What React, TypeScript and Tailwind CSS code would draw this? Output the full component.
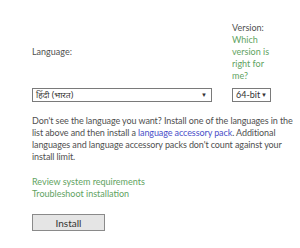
import React from "react";

export default function App() {
  return (
    <div
      className="w-[300px] h-[248px] bg-white text-[#505050] text-[9px] leading-[12px]"
      style={{ fontFamily: 'Lato, "Noto Sans", sans-serif' }}
    >
      <div className="pl-[32px] pr-[16px] pt-[22px]">
        <div className="flex">
          <div className="w-[200px] flex items-center">Language:</div>
          <div className="w-[50px] whitespace-nowrap">
            <div>Version:</div>
            <div className="text-[#5fa35f]">
              Which
              <br />
              version is
              <br />
              right for
              <br />
              me?
            </div>
          </div>
        </div>
        <div className="flex mt-[6px]">
          <div className="w-[180px] h-[14px] border border-[#7a7a7a] flex items-center justify-between pl-[3px] pr-[4px] text-[#333]">
            <span style={{ fontFamily: '"Noto Sans", sans-serif' }} className="text-[8.5px]">
              हिंदी (भारत)
            </span>
            <span className="text-[6px]">▼</span>
          </div>
          <div className="ml-[20px] w-[39px] h-[14px] border border-[#7a7a7a] flex items-center justify-between pl-[3px] pr-[3px] text-[#333] whitespace-nowrap">
            <span>64-bit</span>
            <span className="text-[6px]">▼</span>
          </div>
        </div>
        <p className="mt-[13px] whitespace-nowrap tracking-[-0.1px]">
          Don't see the language you want? Install one of the languages in the
          <br />
          list above and then install a <span className="text-[#4b4fc9]">language accessory pack</span>. Additional
          <br />
          languages and language accessory packs don't count against your
          <br />
          install limit.
        </p>
        <div className="mt-[13px] text-[#5fa35f]">
          <div>Review system requirements</div>
          <div>Troubleshoot installation</div>
        </div>
        <div className="mt-[14px] w-[73px] h-[17px] border border-[#8a8a8a] bg-[#e5e5e5] flex items-center justify-center text-[10px] text-[#333]">
          Install
        </div>
      </div>
    </div>
  );
}
